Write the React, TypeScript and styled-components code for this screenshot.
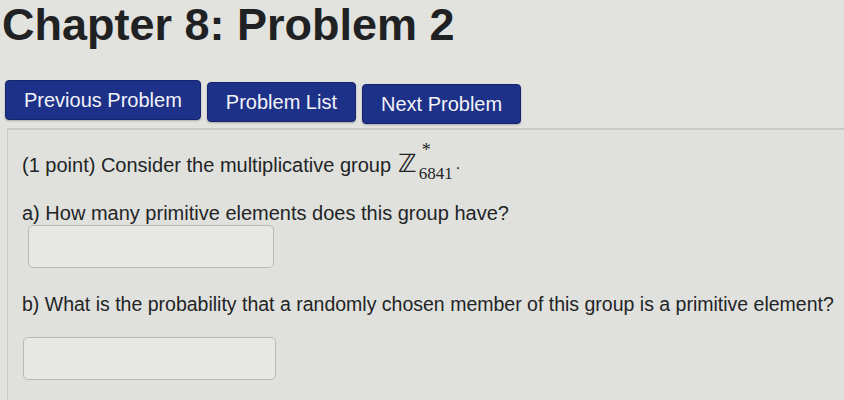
import { createGlobalStyle } from "styled-components";
import styled from "styled-components";

const GlobalStyle = createGlobalStyle`
  html, body {
    margin: 0;
    padding: 0;
    background: #e2e3df;
    overflow: hidden;
  }
  body {
    font-family: "Liberation Sans", Arial, sans-serif;
    color: #222426;
  }
`;

const Page = styled.div`
  width: 844px;
  height: 400px;
  padding-left: 2px;
  box-sizing: border-box;
`;

const Title = styled.h1`
  margin: 0;
  font-size: 45px;
  line-height: 1.12;
  font-weight: 700;
  color: #1f2123;
`;

const Nav = styled.div`
  display: flex;
  align-items: flex-start;
  gap: 6px;
  margin: 30px 0 0 3px;
`;

const NavButton = styled.button<{ $lift?: number }>`
  height: 40px;
  padding: 0 18px;
  margin-top: ${(p) => p.$lift ?? 0}px;
  border: 1px solid #15246c;
  border-radius: 4px;
  background: #1e3189;
  color: #f2f3f7;
  font-family: "Liberation Sans", Arial, sans-serif;
  font-size: 20px;
  box-shadow: 0 1px 2px rgba(0, 0, 0, 0.25);
`;

const Panel = styled.div`
  margin: 4px 0 0 5px;
  padding: 22px 0 0 14px;
  height: 300px;
  background: #e0e1dd;
  border-top: 2px solid #c9cac6;
  border-left: 1px solid #cacbc7;
`;

const Question = styled.p<{ $size?: number }>`
  margin: 0;
  font-size: ${(p) => p.$size ?? 20}px;
  line-height: 24px;
  white-space: nowrap;
`;

const Blackboard = styled.span`
  font-family: "DejaVu Sans", sans-serif;
  font-size: 25px;
  margin-left: 7px;
`;

/* superscript star stacked over the subscript modulus */
const Scripts = styled.span`
  display: inline-flex;
  flex-direction: column;
  vertical-align: 16px;
  margin: -20px 0 -20px 2px;
  line-height: 1;
  font-family: "Liberation Serif", "Times New Roman", serif;
`;

const Sup = styled.span`
  font-size: 18px;
  line-height: 12px;
  padding-left: 3px;
`;

const Sub = styled.span`
  font-size: 17px;
  line-height: 14px;
  margin-top: 11px;
`;

const Period = styled.span`
  font-size: 16px;
  margin-left: 3px;
  vertical-align: 3px;
`;

const Part = styled.div<{ $gap: number }>`
  margin-top: ${(p) => p.$gap}px;
`;

const AnswerBox = styled.input<{ $top: number; $indent: number; $width: number }>`
  display: block;
  box-sizing: border-box;
  width: ${(p) => p.$width}px;
  height: 43px;
  margin: ${(p) => p.$top}px 0 0 ${(p) => p.$indent}px;
  border: 1.5px solid #b9bab6;
  border-radius: 5px;
  background: #e7e8e4;
  outline: none;
`;

export default function App() {
  return (
    <Page>
      <GlobalStyle />
      <Title>Chapter 8: Problem 2</Title>
      <Nav>
        <NavButton>Previous Problem</NavButton>
        <NavButton $lift={2}>Problem List</NavButton>
        <NavButton $lift={4}>Next Problem</NavButton>
      </Nav>
      <Panel>
        <Question>
          (1 point) Consider the multiplicative group
          <Blackboard>ℤ</Blackboard>
          <Scripts>
            <Sup>*</Sup>
            <Sub>6841</Sub>
          </Scripts>
          <Period>.</Period>
        </Question>
        <Part $gap={24}>
          <Question>a) How many primitive elements does this group have?</Question>
          <AnswerBox type="text" $top={0} $indent={6} $width={246} />
        </Part>
        <Part $gap={24}>
          <Question $size={19.5}>
            b) What is the probability that a randomly chosen member of this group is a primitive element?
          </Question>
          <AnswerBox type="text" $top={21} $indent={1} $width={253} />
        </Part>
      </Panel>
    </Page>
  );
}
